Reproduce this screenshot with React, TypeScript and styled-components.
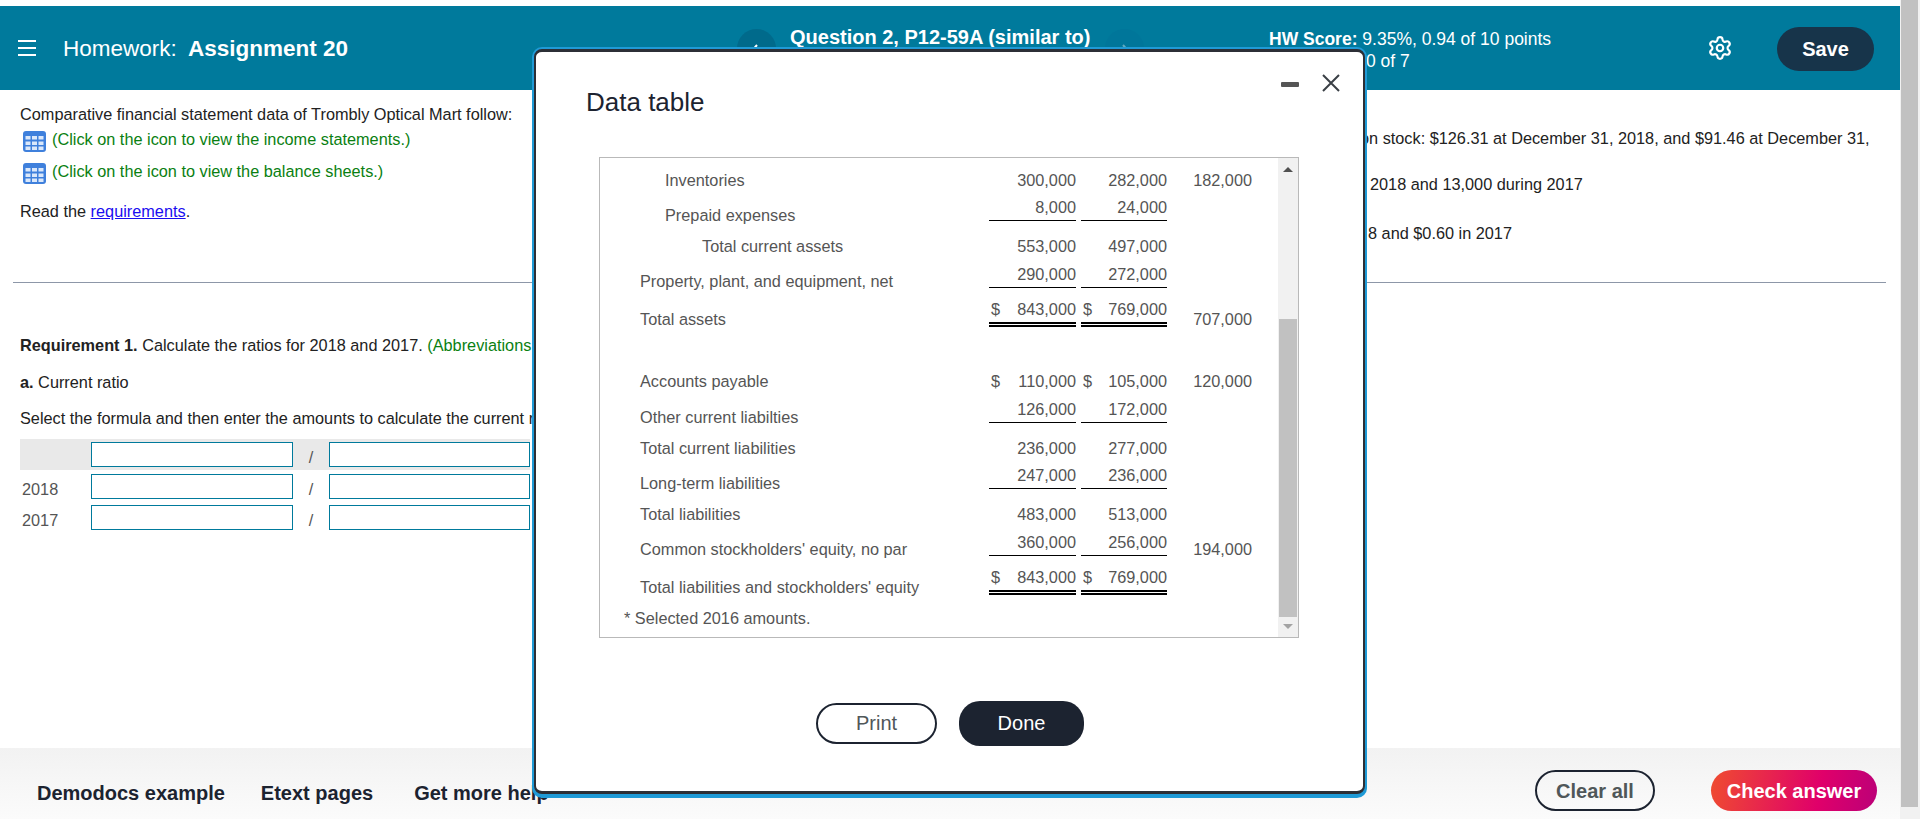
import React from 'react';
import styled, {createGlobalStyle} from "styled-components";
import {Settings} from "lucide-react";

const GlobalStyle = createGlobalStyle`
  html, body {
    margin: 0;
    height: 100%;
    overflow: hidden;
    background: #fff;
    font-family: "Liberation Sans", Arial, sans-serif;
    font-size: 16.3px;
    color: #222;
  }

  * {
    box-sizing: border-box;
  }
`;

const Screen = styled.div`
  position: relative;
  display: flex;
  width: 1920px;
  height: 819px;
  overflow: hidden;
`;

const Page = styled.div`
  width: 1900px;
  height: 100%;
  padding-top: 6px;
  display: flex;
  flex-direction: column;
`;

const PageScroll = styled.div`
  width: 20px;
  height: 100%;
  background: #f1f1f1;
`;

const PageThumb = styled.div`
  width: 17px;
  height: 807px;
  margin-left: 1px;
  background: #c1c1c1;
`;

const Header = styled.header`
  flex: 0 0 84px;
  display: flex;
  align-items: center;
  background: #007a9c;
  color: #fff;
`;

const HeaderLeft = styled.div`
  flex: 0 0 737px;
  display: flex;
  align-items: center;
  padding-left: 18px;
`;

const Title = styled.div`
  margin: 2px 0 0 27px;
  font-size: 22.5px;

  b {
    margin-left: 5px;
  }
`;

const NavCircle = styled.div<{ $dim?: boolean }>`
  flex: 0 0 39px;
  height: 39px;
  border-radius: 50%;
  background: ${props => props.$dim ? "#00769a" : "#006a8b"};
`;

const QuestionTitle = styled.div`
  margin: 0 15px 22px 14px;
  width: 300px;
  font-size: 20px;
  font-weight: 700;
  white-space: nowrap;
`;

const Score = styled.div`
  margin: 4px 0 0 125px;
  width: 438px;
  font-size: 17.5px;
  line-height: 22px;
`;

const ScoreRest = styled.div`
  padding-left: 97px;
`;

const GearWrap = styled.div`
  display: flex;
  width: 70px;
`;

const SaveButton = styled.button`
  width: 97px;
  height: 44px;
  margin-top: 2px;
  border: 0;
  border-radius: 22px;
  background: #17344a;
  color: #fff;
  font: 700 20px "Liberation Sans", Arial, sans-serif;
`;

const Content = styled.main`
  flex: 1;
  display: flex;
  flex-direction: column;
`;

const Intro = styled.section`
  display: flex;
  height: 192px;
`;

const IntroLeft = styled.div`
  width: 1360px;
  padding: 14px 0 0 20px;
`;

const IntroRight = styled.div`
  flex: 1;
  padding-top: 38px;
`;

const Line = styled.div<{ $gap?: number }>`
  line-height: 20px;
  margin-top: ${props => props.$gap ?? 0}px;
  white-space: nowrap;
`;

const RightLine = styled(Line)<{ $indent: number }>`
  padding-left: ${props => props.$indent}px;
`;

const IconLine = styled.div<{ $gap: number }>`
  display: flex;
  gap: 6px;
  height: 23px;
  margin: ${props => props.$gap}px 0 0 3px;
  line-height: 20px;
`;

const TableIcon = styled.svg`
  width: 23px;
  height: 21px;
  margin-top: 2px;
`;

const Green = styled.span`
  color: #0a7f12;
`;

const Link = styled.a`
  color: #1a0df0;
  text-decoration: underline;
`;

const Divider = styled.hr`
  height: 1px;
  margin: 0 14px 0 13px;
  border: 0;
  background: #8d97a8;
`;

const Work = styled.section`
  padding: 52px 0 0 20px;
`;

const FormulaRow = styled.div<{ $shaded?: boolean }>`
  display: grid;
  grid-template-columns: 71px 202px 36px 201px;
  width: 510px;
  height: 31px;
  padding-top: 3px;
  margin-bottom: ${props => props.$shaded ? 1 : 0}px;
  background: ${props => props.$shaded ? "#e9e9e9" : "transparent"};
`;

const YearCell = styled.div`
  padding: 5px 0 0 2px;
  line-height: 20px;
  color: #555;
`;

const SlashCell = styled.div`
  padding-top: 5px;
  line-height: 20px;
  text-align: center;
  color: #555;
`;

const AmountInput = styled.input`
  width: 100%;
  height: 25px;
  border: 1px solid #007a9c;
  outline: 0;
  background: #fff;
`;

const Footer = styled.footer`
  flex: 0 0 71px;
  display: flex;
  align-items: flex-start;
  padding: 22px 23px 0 37px;
  background: linear-gradient(#f2f2f2, #fbfbfb);
`;

const FooterLink = styled.div<{ $gap: number }>`
  margin: 3px ${props => props.$gap}px 0 0;
  font-size: 20px;
  line-height: 41px;
  font-weight: 700;
  color: #1c2330;
`;

const PillButton = styled.button<{ $width: number; $height: number; $variant: "outline" | "dark" | "hot" }>`
  width: ${props => props.$width}px;
  height: ${props => props.$height}px;
  border-radius: 21px;
  border: ${props => props.$variant === "outline" ? "2px solid #1c2330" : "0"};
  background: ${props => ({
    outline: "transparent",
    dark: "#1c2330",
    hot: "linear-gradient(100deg, #ef4c30 0%, #e0006a 65%, #bb0078 100%)",
  }[props.$variant])};
  color: ${props => props.$variant === "outline" ? "#505759" : "#fff"};
  font: ${props => props.$variant === "hot" || props.$width === 120 ? 700 : 400} 20px "Liberation Sans", Arial, sans-serif;
`;

const FooterActions = styled.div`
  display: flex;
  gap: 56px;
  margin-left: auto;

  ${PillButton} {
    padding-top: 3px;
  }
`;

const Modal = styled.div`
  position: absolute;
  left: 534px;
  top: 49px;
  width: 831px;
  height: 745px;
  display: flex;
  flex-direction: column;
  background: #fff;
  border-style: solid;
  border-color: #2c2f36;
  border-width: 3px 2px 3px 2px;
  border-radius: 8px;
  box-shadow: 0 0 0 2px #1f9ad6, 0 2px 0 2px #1f9ad6;
`;

const ModalHeader = styled.div`
  display: flex;
  justify-content: space-between;
  height: 65px;
  padding: 22px 23px 0 50px;
`;

const ModalTitle = styled.h2`
  margin: 13px 0 0;
  font-size: 26px;
  line-height: 30px;
  font-weight: 400;
  color: #1c2330;
`;

const ModalControls = styled.div`
  display: flex;
  gap: 23px;
`;

const MinimizeBar = styled.div`
  width: 18px;
  height: 5px;
  margin-top: 8px;
  border-radius: 1px;
  background: #555;
`;

const DataBox = styled.div`
  display: flex;
  width: 700px;
  height: 481px;
  margin: 40px 0 0 63px;
  border: 1px solid #b9b9b9;
`;

const DataRows = styled.div`
  width: 678px;
  padding-top: 1px;
  color: #555;
`;

const DataRow = styled.div<{ $height: number }>`
  display: grid;
  grid-template-columns: 389px 87px 91px 85px;
  height: ${props => props.$height}px;
`;

const Label = styled.div<{ $indent: number; $top: number }>`
  padding: ${props => props.$top}px 0 0 ${props => props.$indent}px;
  line-height: 18px;
  white-space: nowrap;
`;

const Amount = styled.div<{ $top: number; $rule?: "single" | "double"; $inset?: boolean }>`
  display: flex;
  justify-content: space-between;
  align-self: start;
  margin: ${props => props.$top}px 0 0 ${props => props.$inset ? 5 : 0}px;
  padding: 0 0 4px 2px;
  line-height: 18px;
  border-bottom: ${props => props.$rule === "double" ? "5px double #000" : props.$rule === "single" ? "1px solid #000" : "0"};
`;

const Third = styled.div<{ $top: number }>`
  padding-top: ${props => props.$top}px;
  line-height: 18px;
  text-align: right;
`;

const DataScroll = styled.div`
  width: 20px;
  display: flex;
  flex-direction: column;
  align-items: center;
  background: #f1f1f1;
`;

const ArrowUp = styled.div`
  margin-top: 9px;
  border: 5px solid transparent;
  border-top: 0;
  border-bottom-color: #505050;
`;

const DataThumb = styled.div`
  flex: 0 0 298px;
  width: 18px;
  margin-top: 147px;
  background: #c1c1c1;
`;

const ArrowDown = styled.div`
  margin-top: 7px;
  border: 5px solid transparent;
  border-bottom: 0;
  border-top-color: #a3a3a3;
`;

const ModalActions = styled.div`
  display: flex;
  align-items: center;
  gap: 22px;
  margin: 63px 0 0 280px;
`;

interface IRow {
    label: string;
    indent: number;
    height: number;
    labelTop: number;
    valueTop?: number;
    a?: string;
    b?: string;
    c?: string;
    cTop?: number;
    rule?: "single" | "double";
    dollar?: boolean;
}

const rows: IRow[] = [
    {label: "Inventories", indent: 65, height: 34, labelTop: 12, valueTop: 12, a: "300,000", b: "282,000", c: "182,000", cTop: 12},
    {label: "Prepaid expenses", indent: 65, height: 34, labelTop: 13, valueTop: 5, a: "8,000", b: "24,000", rule: "single"},
    {label: "Total current assets", indent: 102, height: 36, labelTop: 10, valueTop: 10, a: "553,000", b: "497,000"},
    {label: "Property, plant, and equipment, net", indent: 40, height: 32, labelTop: 9, valueTop: 2, a: "290,000", b: "272,000", rule: "single"},
    {label: "Total assets", indent: 40, height: 46, labelTop: 15, valueTop: 5, a: "843,000", b: "769,000", c: "707,000", cTop: 15, rule: "double", dollar: true},
    {label: "", indent: 40, height: 24, labelTop: 0},
    {label: "Accounts payable", indent: 40, height: 32, labelTop: 7, valueTop: 7, a: "110,000", b: "105,000", c: "120,000", cTop: 7, dollar: true},
    {label: "Other current liabilties", indent: 40, height: 32, labelTop: 11, valueTop: 3, a: "126,000", b: "172,000", rule: "single"},
    {label: "Total current liabilities", indent: 40, height: 34, labelTop: 10, valueTop: 10, a: "236,000", b: "277,000"},
    {label: "Long-term liabilities", indent: 40, height: 32, labelTop: 11, valueTop: 3, a: "247,000", b: "236,000", rule: "single"},
    {label: "Total liabilities", indent: 40, height: 34, labelTop: 10, valueTop: 10, a: "483,000", b: "513,000"},
    {label: "Common stockholders' equity, no par", indent: 40, height: 32, labelTop: 11, valueTop: 4, a: "360,000", b: "256,000", c: "194,000", cTop: 11, rule: "single"},
    {label: "Total liabilities and stockholders' equity", indent: 40, height: 44, labelTop: 17, valueTop: 7, a: "843,000", b: "769,000", rule: "double", dollar: true},
    {label: "* Selected 2016 amounts.", indent: 24, height: 31, labelTop: 4},
];

const GridIcon = () => (
    <TableIcon viewBox="0 0 23 21">
        <rect width="23" height="21" rx="3" fill="#3f80dc"/>
        {[5, 10.5, 15.5].map(y => [2.5, 9, 15.5].map(x => (
            <rect key={`${x}-${y}`} x={x} y={y} width="5" height="3.5" fill="#dbe8fa"/>
        )))}
    </TableIcon>
);

function App() {
    return (
        <Screen>
            <GlobalStyle/>
            <Page>
                <Header>
                    <HeaderLeft>
                        <svg width="18" height="16" viewBox="0 0 18 16" stroke="#fff" strokeWidth="2">
                            <path d="M0 1h18M0 8h18M0 15h18"/>
                        </svg>
                        <Title>Homework: <b>Assignment 20</b></Title>
                    </HeaderLeft>
                    <NavCircle>
                        <svg width="39" height="39" viewBox="0 0 39 39" fill="none" stroke="#fff" strokeWidth="2">
                            <path d="M20 16l-6 7 6 7"/>
                        </svg>
                    </NavCircle>
                    <QuestionTitle>Question 2, P12-59A (similar to)</QuestionTitle>
                    <NavCircle $dim>
                        <svg width="39" height="39" viewBox="0 0 39 39" fill="none" stroke="#5fa9c0" strokeWidth="2">
                            <path d="M18 16l6 7-6 7"/>
                        </svg>
                    </NavCircle>
                    <Score>
                        <div><b>HW Score:</b> 9.35%, 0.94 of 10 points</div>
                        <ScoreRest>0 of 7</ScoreRest>
                    </Score>
                    <GearWrap>
                        <Settings size={26} color="#fff" strokeWidth={2}/>
                    </GearWrap>
                    <SaveButton>Save</SaveButton>
                </Header>
                <Content>
                    <Intro>
                        <IntroLeft>
                            <Line>Comparative financial statement data of Trombly Optical Mart follow:</Line>
                            <IconLine $gap={5}>
                                <GridIcon/>
                                <Green>(Click on the icon to view the income statements.)</Green>
                            </IconLine>
                            <IconLine $gap={9}>
                                <GridIcon/>
                                <Green>(Click on the icon to view the balance sheets.)</Green>
                            </IconLine>
                            <Line $gap={17}>Read the <Link>requirements</Link>.</Line>
                        </IntroLeft>
                        <IntroRight>
                            <RightLine $indent={0}>on stock: $126.31 at December 31, 2018, and $91.46 at December 31,</RightLine>
                            <RightLine $indent={10} $gap={26}>2018 and 13,000 during 2017</RightLine>
                            <RightLine $indent={8} $gap={29}>8 and $0.60 in 2017</RightLine>
                        </IntroRight>
                    </Intro>
                    <Divider/>
                    <Work>
                        <Line><b>Requirement 1.</b> Calculate the ratios for 2018 and 2017. <Green>(Abbreviations</Green></Line>
                        <Line $gap={17}><b>a.</b> Current ratio</Line>
                        <Line $gap={16}>Select the formula and then enter the amounts to calculate the current ratios.</Line>
                        <Line $gap={11}/>
                        {["", "2018", "2017"].map(year => (
                            <FormulaRow key={year} $shaded={year === ""}>
                                <YearCell>{year}</YearCell>
                                <AmountInput/>
                                <SlashCell>/</SlashCell>
                                <AmountInput/>
                            </FormulaRow>
                        ))}
                    </Work>
                </Content>
                <Footer>
                    <FooterLink $gap={36}>Demodocs example</FooterLink>
                    <FooterLink $gap={41}>Etext pages</FooterLink>
                    <FooterLink $gap={0}>Get more help</FooterLink>
                    <FooterActions>
                        <PillButton $width={120} $height={41} $variant="outline">Clear all</PillButton>
                        <PillButton $width={166} $height={41} $variant="hot">Check answer</PillButton>
                    </FooterActions>
                </Footer>
            </Page>
            <PageScroll>
                <PageThumb/>
            </PageScroll>
            <Modal>
                <ModalHeader>
                    <ModalTitle>Data table</ModalTitle>
                    <ModalControls>
                        <MinimizeBar/>
                        <svg width="18" height="18" viewBox="0 0 18 18" stroke="#3a3f45" strokeWidth="2">
                            <path d="M1 1l16 16M17 1L1 17"/>
                        </svg>
                    </ModalControls>
                </ModalHeader>
                <DataBox>
                    <DataRows>
                        {rows.map(row => (
                            <DataRow key={row.label || "gap"} $height={row.height}>
                                <Label $indent={row.indent} $top={row.labelTop}>{row.label}</Label>
                                {row.a && (
                                    <Amount $top={row.valueTop ?? 0} $rule={row.rule}>
                                        <span>{row.dollar && "$"}</span>
                                        <span>{row.a}</span>
                                    </Amount>
                                )}
                                {row.b && (
                                    <Amount $top={row.valueTop ?? 0} $rule={row.rule} $inset>
                                        <span>{row.dollar && "$"}</span>
                                        <span>{row.b}</span>
                                    </Amount>
                                )}
                                {row.c && <Third $top={row.cTop ?? 0}>{row.c}</Third>}
                            </DataRow>
                        ))}
                    </DataRows>
                    <DataScroll>
                        <ArrowUp/>
                        <DataThumb/>
                        <ArrowDown/>
                    </DataScroll>
                </DataBox>
                <ModalActions>
                    <PillButton $width={121} $height={41} $variant="outline">Print</PillButton>
                    <PillButton $width={125} $height={45} $variant="dark">Done</PillButton>
                </ModalActions>
            </Modal>
        </Screen>
    );
}

export default App;
